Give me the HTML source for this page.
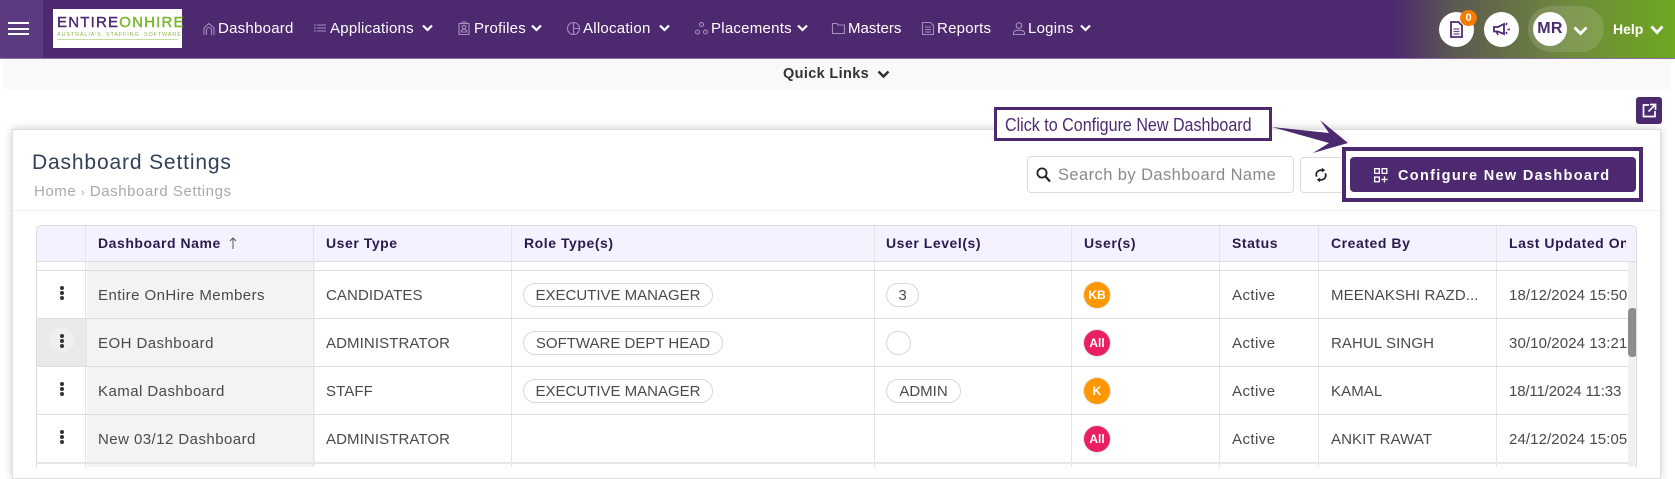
<!DOCTYPE html>
<html><head><meta charset="utf-8"><style>
html,body{margin:0;padding:0;background:#fff}
body{width:1675px;height:467px;position:relative;overflow:hidden;font-family:"Liberation Sans",sans-serif}
.a{position:absolute}
.t{position:absolute;white-space:nowrap;height:20px;line-height:20px}
.n{color:#fff;font-size:15px;letter-spacing:.25px;top:19px}
svg{position:absolute;overflow:visible}
.ic{fill:none;stroke:#a48fbc;stroke-width:1.1}
.ch{fill:none;stroke:#fff;stroke-width:2.2}
.h{font-size:14px;font-weight:bold;color:#2a1b4d;letter-spacing:.55px;top:233px}
.c{font-size:15px;color:#4a4a4a;letter-spacing:.45px}
.u{letter-spacing:.1px}
.p{position:absolute;box-sizing:border-box;height:24px;border:1px solid #d8d8d8;border-radius:12px;background:#fff;font-size:15px;line-height:23px;color:#4a4a4a;letter-spacing:0;text-align:center;white-space:nowrap}
.av{position:absolute;left:1084px;width:26px;height:26px;border-radius:50%;color:#fff;font-size:12px;font-weight:bold;line-height:26px;text-align:center;box-shadow:0 0 0 1px #e4e4e4}
.v{position:absolute;width:1px;background:#e4e4e8}
.l{position:absolute;left:36px;width:1592px;height:1px;background:#dedede}
.d{position:absolute;left:59.500px;width:4px;height:4px;border-radius:50%;background:#333}
</style></head><body>

<div class="a" style="left:0;top:0;width:1675px;height:58px;background:linear-gradient(90deg,#4d2a70 0,#4d2a70 1395px,#5c5a50 1455px,#6f8a3c 1570px,#6da81f 1675px);border-bottom:1px solid #8a6fa6"></div>
<div class="a" style="left:0;top:0;width:43px;height:58px;background:#5b3a80"></div>
<div class="a" style="left:8px;top:22px;width:21px;height:2.4px;background:#fff"></div>
<div class="a" style="left:8px;top:27.5px;width:21px;height:2.4px;background:#fff"></div>
<div class="a" style="left:8px;top:33px;width:21px;height:2.4px;background:#fff"></div>

<div class="a" style="left:53px;top:9px;width:129px;height:39px;background:#fff"></div>
<div class="t" style="left:57px;top:13px;font-size:15px;font-weight:normal;letter-spacing:1.2px;color:#4d2a70;-webkit-text-stroke:.4px #4d2a70">ENTIRE<span style="color:#76b82a;-webkit-text-stroke:.4px #76b82a">ONHIRE</span></div>
<div class="t" style="left:57px;top:25px;font-size:5.5px;letter-spacing:.85px;word-spacing:2px;color:#8dbb4e">AUSTRALIA'S STAFFING SOFTWARE</div>
<div class="a" style="left:57px;top:39px;width:121px;height:1px;background:#c2dfa0"></div>

<svg style="left:203px;top:22px" width="12" height="14" viewBox="0 0 12 14"><path class="ic" d="M1 13V6L6 1.5 11 6v7M3.5 13V8a2.5 2.5 0 0 1 5 0v5"/></svg>
<div class="t n" style="left:218px">Dashboard</div>
<svg style="left:314px;top:24px" width="12" height="8" viewBox="0 0 12 8"><path class="ic" d="M0 1h2M3 1h9M0 4h2M3 4h9M0 7h2M3 7h9"/></svg>
<div class="t n" style="left:330px">Applications</div>
<svg style="left:422px;top:24px" width="11" height="8" viewBox="0 0 11 8"><path class="ch" d="M1 1.5l4.5 4.5L10 1.5"/></svg>
<svg style="left:458px;top:21px" width="12" height="14" viewBox="0 0 12 14"><path class="ic" d="M1 2.5h10v11H1zM4 2.5V1h4v1.500M3 11c0-2 1.500-2.500 3-2.500s3 .5 3 2.500z"/><circle class="ic" cx="6" cy="6" r="1.800"/></svg>
<div class="t n" style="left:474px">Profiles</div>
<svg style="left:531px;top:24px" width="11" height="8" viewBox="0 0 11 8"><path class="ch" d="M1 1.5l4.5 4.5L10 1.5"/></svg>
<svg style="left:567px;top:22px" width="13" height="13" viewBox="0 0 13 13"><circle class="ic" cx="6.500" cy="6.500" r="6"/><path class="ic" d="M6.500.5v12M6.500 6.500h6"/></svg>
<div class="t n" style="left:583px">Allocation</div>
<svg style="left:659px;top:24px" width="11" height="8" viewBox="0 0 11 8"><path class="ch" d="M1 1.5l4.5 4.5L10 1.5"/></svg>
<svg style="left:695px;top:22px" width="13" height="13" viewBox="0 0 13 13"><circle class="ic" cx="6.500" cy="2.500" r="2"/><circle class="ic" cx="2.500" cy="10" r="2"/><circle class="ic" cx="10.500" cy="10" r="2"/></svg>
<div class="t n" style="left:711px">Placements</div>
<svg style="left:797px;top:24px" width="11" height="8" viewBox="0 0 11 8"><path class="ch" d="M1 1.5l4.5 4.5L10 1.5"/></svg>
<svg style="left:832px;top:23px" width="13" height="11" viewBox="0 0 13 11"><path class="ic" d="M.5.5h4.500l1 1.500h6.500v8.500H.5z"/></svg>
<div class="t n" style="left:848px;letter-spacing:0">Masters</div>
<svg style="left:922px;top:22px" width="12" height="13" viewBox="0 0 12 13"><path class="ic" d="M.5.5h8l3 3v9H.5zM3 5h6M3 7.500h6M3 10h6"/></svg>
<div class="t n" style="left:937px">Reports</div>
<svg style="left:1013px;top:22px" width="12" height="13" viewBox="0 0 12 13"><circle class="ic" cx="6" cy="3.500" r="2.800"/><path class="ic" d="M.5 12.500v-1.500c0-2 2-2.800 5.500-2.800s5.500.8 5.500 2.800v1.500z"/></svg>
<div class="t n" style="left:1028px">Logins</div>
<svg style="left:1080px;top:24px" width="11" height="8" viewBox="0 0 11 8"><path class="ch" d="M1 1.5l4.5 4.5L10 1.500"/></svg>

<div class="a" style="left:1439px;top:12px;width:35px;height:35px;border-radius:50%;background:#fff"></div>
<svg style="left:1450px;top:21px" width="13" height="17" viewBox="0 0 13 17"><path d="M1 1h7.500L12 4.500V16H1z" fill="#fff" stroke="#4d2a70" stroke-width="1.800"/><path d="M3.500 8h6M3.500 10.500h6M3.500 13h6" stroke="#6b4a8e" stroke-width="1.300"/></svg>
<div class="a" style="left:1460px;top:10px;width:17px;height:16px;border-radius:50%;background:#f57c00;color:#fff;font-size:11px;font-weight:bold;line-height:16px;text-align:center">0</div>
<div class="a" style="left:1484px;top:12px;width:35px;height:35px;border-radius:50%;background:#fff"></div>
<svg style="left:1493px;top:21px" width="18" height="17" viewBox="0 0 18 17"><path d="M1 6h4l6-3v10L5 10.500H1z" fill="none" stroke="#4d2a70" stroke-width="1.800"/><path d="M3.500 10.500L5 14M14 2l-1 2M14.500 8.500h2.500M14 13l-1-2" stroke="#4d2a70" stroke-width="1.600" fill="none"/></svg>
<div class="a" style="left:1528px;top:6px;width:76px;height:46px;border-radius:23px;background:rgba(255,255,255,.13)"></div>
<div class="a" style="left:1533px;top:12px;width:34px;height:34px;border-radius:50%;background:#fff;color:#4d2a70;font-size:16px;font-weight:bold;line-height:34px;text-align:center;letter-spacing:.3px">MR</div>
<svg style="left:1573px;top:26px" width="15" height="10" viewBox="0 0 15 10"><path d="M1.500 1.500l6 6 6-6" fill="none" stroke="#fff" stroke-width="2.800"/></svg>
<div class="t" style="left:1613px;top:19px;color:#fff;font-size:14px;font-weight:bold">Help</div>
<svg style="left:1650px;top:25px" width="14" height="10" viewBox="0 0 14 10"><path d="M1.500 1.500l5.500 6 5.500-6" fill="none" stroke="#fff" stroke-width="2.800"/></svg>

<div class="a" style="left:3px;top:59px;width:1668px;height:30px;background:#f9f9f9"></div>
<div class="t" style="left:783px;top:64px;font-size:14.500px;font-weight:bold;color:#333;letter-spacing:.35px">Quick Links</div>
<svg style="left:877px;top:70px" width="13" height="9" viewBox="0 0 13 9"><path d="M1.500 1.500l5 5 5-5" fill="none" stroke="#2e2e2e" stroke-width="2.400"/></svg>

<div class="a" style="left:1636px;top:97px;width:26px;height:27px;border-radius:3px;background:#4d2a70"></div>
<svg style="left:1642px;top:103px" width="15" height="15" viewBox="0 0 15 15"><path d="M7 2H1.500v11.500H13V8M8 1.500h5.500V7M13 2L6.500 8.500" fill="none" stroke="#fff" stroke-width="1.700"/></svg>

<div class="a" style="left:12px;top:129px;width:1649px;height:350px;box-sizing:border-box;border:1px solid #dedede;background:#fff;box-shadow:0 0 9px rgba(0,0,0,.2)"></div>
<div class="t" style="left:32px;top:151px;height:24px;line-height:24px;font-size:21px;color:#33405a;letter-spacing:.85px">Dashboard Settings</div>
<div class="t" style="left:34px;top:182px;font-size:15px;color:#a9a9a9;letter-spacing:.55px">Home <span style="font-size:11px">›</span> Dashboard Settings</div>
<div class="a" style="left:13px;top:210px;width:1647px;height:1px;background:#f0f0f0"></div>

<div class="a" style="left:1027px;top:156px;width:267px;height:37px;box-sizing:border-box;border:1px solid #dcdcdc;border-radius:4px;background:#fff"></div>
<svg style="left:1036px;top:167px" width="15" height="16" viewBox="0 0 15 16"><circle cx="6" cy="6" r="4.600" fill="none" stroke="#222" stroke-width="1.800"/><path d="M9.500 9.500l4.500 5" stroke="#222" stroke-width="2.200"/></svg>
<div class="t" style="left:1058px;top:165px;font-size:16.500px;color:#8a8a8a;letter-spacing:.42px">Search by Dashboard Name</div>
<div class="a" style="left:1300px;top:157px;width:44px;height:36px;box-sizing:border-box;border:1px solid #dcdcdc;border-radius:4px;background:#fff"></div>
<svg style="left:1315px;top:166px" width="12" height="18" viewBox="0 0 14 18"><path d="M2 11C0 6 4 2.500 9 3.500M12 7c2 5-2 8.500-7 7.500" fill="none" stroke="#222" stroke-width="2"/><path d="M8 .5l4 3-4 2.500zM6 17.500l-4-3 4-2.500z" fill="#222"/></svg>

<div class="a" style="left:1342px;top:147px;width:301px;height:55px;box-sizing:border-box;border:4.500px solid #4d2a70;background:#fff"></div>
<div class="a" style="left:1350px;top:157px;width:286px;height:35px;border-radius:4px;background:#4d2a70"></div>
<svg style="left:1374px;top:168px" width="14" height="15" viewBox="0 0 15 16"><path d="M.7.700h5v5h-5zM8.700.700h5v5h-5zM.7 9.700h5v5h-5zM11.200 9v6.500M8 12.200h6.500" fill="none" stroke="#fff" stroke-width="1.400"/></svg>
<div class="t" style="left:1398px;top:166px;font-size:14.500px;font-weight:bold;color:#fff;letter-spacing:1.32px">Configure New Dashboard</div>

<div class="a" style="left:994px;top:107px;width:278px;height:34px;box-sizing:border-box;border:3.500px solid #4d2a70;background:#fff"></div>
<div class="t" id="cl" style="left:1005px;top:115px;font-size:18px;color:#4d2a70;transform:scaleX(.893);transform-origin:left center">Click to Configure New Dashboard</div>
<svg style="left:0;top:0" width="1675" height="467"><path d="M1272 127L1329 133 1320 120 1348 143 1313 153 1329 143Z" fill="#4d2a70"/></svg>

<div class="a" style="left:36px;top:225px;width:1601px;height:242px;box-sizing:border-box;border:1px solid #dcdcdc;border-bottom:0;border-radius:5px 5px 0 0;overflow:hidden;background:#fff">
<div class="a" style="left:0;top:0;width:1600px;height:35px;background:#f4f2fe;border-bottom:1px solid #dcdcdc"></div>
<div class="a" style="left:50px;top:36px;width:228px;height:210px;background:#f3f3f3"></div>
<div class="a" style="left:0;top:93px;width:50px;height:48px;background:#e9e9e9"></div>
<div class="a" style="left:12px;top:101px;width:26px;height:26px;border-radius:50%;background:#efefef"></div>
<div class="a" style="left:1591px;top:36px;width:10px;height:210px;background:#f0f0f0;z-index:5"></div>
<div class="a" style="left:1591px;top:82px;width:9px;height:49px;border-radius:4px;background:#8d8d8d;z-index:6"></div>
</div>
<div class="v" style="left:85px;top:226px;height:241px"></div>
<div class="v" style="left:313px;top:226px;height:241px"></div>
<div class="v" style="left:511px;top:226px;height:241px"></div>
<div class="v" style="left:874px;top:226px;height:241px"></div>
<div class="v" style="left:1071px;top:226px;height:241px"></div>
<div class="v" style="left:1219px;top:226px;height:241px"></div>
<div class="v" style="left:1318px;top:226px;height:241px"></div>
<div class="v" style="left:1496px;top:226px;height:241px"></div>
<div class="l" style="top:270px"></div>
<div class="l" style="top:318px"></div>
<div class="l" style="top:366px"></div>
<div class="l" style="top:414px"></div>
<div class="l" style="top:462px;height:2px;background:#e6e6e6"></div>

<div class="t h" style="left:98px">Dashboard Name</div>
<svg style="left:229px;top:237px" width="8" height="12" viewBox="0 0 8 12"><path d="M4 12V1M1 4l3-3 3 3" fill="none" stroke="#555" stroke-width="1"/></svg>
<div class="t h" style="left:326px">User Type</div>
<div class="t h" style="left:524px">Role Type(s)</div>
<div class="t h" style="left:886px">User Level(s)</div>
<div class="t h" style="left:1084px">User(s)</div>
<div class="t h" style="left:1232px">Status</div>
<div class="t h" style="left:1331px">Created By</div>
<div class="t h" style="left:1509px;width:117px;overflow:hidden">Last Updated On</div>

<div class="d" style="top:285.500px"></div><div class="d" style="top:290.500px"></div><div class="d" style="top:295.500px"></div>
<div class="d" style="top:333.500px"></div><div class="d" style="top:338.500px"></div><div class="d" style="top:343.500px"></div>
<div class="d" style="top:381.500px"></div><div class="d" style="top:386.500px"></div><div class="d" style="top:391.500px"></div>
<div class="d" style="top:429.500px"></div><div class="d" style="top:434.500px"></div><div class="d" style="top:439.500px"></div>

<div class="t c" style="left:98px;top:286px">Entire OnHire Members</div>
<div class="t c u" style="left:326px;top:286px">CANDIDATES</div>
<div class="p" style="left:523px;top:283px;width:190px">EXECUTIVE MANAGER</div>
<div class="p" style="left:886px;top:283px;width:33px">3</div>
<div class="av" style="top:282px;background:#ff9800">KB</div>
<div class="t c" style="left:1232px;top:286px">Active</div>
<div class="t c u" style="left:1331px;top:286px">MEENAKSHI RAZD...</div>
<div class="t c" style="left:1509px;top:286px;width:118px;overflow:hidden;letter-spacing:.1px">18/12/2024 15:50</div>

<div class="t c" style="left:98px;top:334px">EOH Dashboard</div>
<div class="t c u" style="left:326px;top:334px">ADMINISTRATOR</div>
<div class="p" style="left:523px;top:331px;width:200px">SOFTWARE DEPT HEAD</div>
<div class="p" style="left:886px;top:331px;width:25px"></div>
<div class="av" style="top:330px;background:#e91e63">All</div>
<div class="t c" style="left:1232px;top:334px">Active</div>
<div class="t c u" style="left:1331px;top:334px">RAHUL SINGH</div>
<div class="t c" style="left:1509px;top:334px;width:118px;overflow:hidden;letter-spacing:.1px">30/10/2024 13:21</div>

<div class="t c" style="left:98px;top:382px">Kamal Dashboard</div>
<div class="t c u" style="left:326px;top:382px">STAFF</div>
<div class="p" style="left:523px;top:379px;width:190px">EXECUTIVE MANAGER</div>
<div class="p" style="left:886px;top:379px;width:75px">ADMIN</div>
<div class="av" style="top:378px;background:#ff9800">K</div>
<div class="t c" style="left:1232px;top:382px">Active</div>
<div class="t c u" style="left:1331px;top:382px">KAMAL</div>
<div class="t c" style="left:1509px;top:382px;width:118px;overflow:hidden;letter-spacing:-.15px">18/11/2024 11:33</div>

<div class="t c" style="left:98px;top:430px">New 03/12 Dashboard</div>
<div class="t c u" style="left:326px;top:430px">ADMINISTRATOR</div>
<div class="av" style="top:426px;background:#e91e63">All</div>
<div class="t c" style="left:1232px;top:430px">Active</div>
<div class="t c u" style="left:1331px;top:430px">ANKIT RAWAT</div>
<div class="t c" style="left:1509px;top:430px;width:118px;overflow:hidden;letter-spacing:.1px">24/12/2024 15:05</div>
</body></html>
